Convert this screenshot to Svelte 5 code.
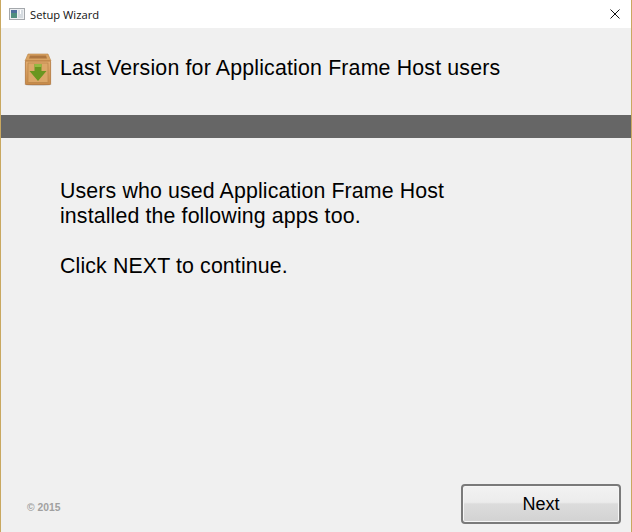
<script>
  const title = 'Setup Wizard'
</script>

<div class="window">
  <div class="titlebar">
    <svg class="app-icon" width="16" height="16" viewBox="0 0 16 16">
      <rect x="0.5" y="2.5" width="15" height="11" fill="#eef0f2" stroke="#a4a8ac"/>
      <rect x="2" y="4" width="6" height="8" fill="#4f8f7e"/>
      <rect x="2" y="4" width="6" height="3" fill="#4d6f9c"/>
      <rect x="9" y="4" width="5" height="8" fill="#d5dbe0"/>
      <rect x="11" y="4" width="1" height="4" fill="#fff"/>
    </svg>
    <span class="title">{title}</span>
    <svg class="close" width="10" height="10" viewBox="0 0 10 10">
      <path d="M0.5 0.5l9 9M9.5 0.5l-9 9" stroke="#111" stroke-width="1" fill="none"/>
    </svg>
  </div>

  <header class="head">
    <svg class="box" width="28" height="34" viewBox="0 0 28 34">
      <defs>
        <linearGradient id="wood" x1="0" y1="0" x2="0" y2="1">
          <stop offset="0" stop-color="#e3ae70"/>
          <stop offset="1" stop-color="#c88a48"/>
        </linearGradient>
      </defs>
      <ellipse cx="14" cy="32.500" rx="13.500" ry="1.300" fill="#c9c4be"/>
      <path d="M4 2h20l3 7H1z" fill="#d9a362" stroke="#b98448" stroke-width="0.600"/>
      <path d="M6 3.500h16l1 3H5z" fill="#ad7640"/>
      <rect x="1.400" y="9" width="25.200" height="23.500" rx="0.800" fill="url(#wood)" stroke="#b0743a" stroke-width="0.800"/>
      <rect x="4" y="11" width="20" height="19.500" fill="#dca768" stroke="#b98448" stroke-width="0.700"/>
      <path d="M10.500 12h7v7h5L14 29 5.500 19h5z" fill="#6b9620"/>
      <path d="M10.500 12h7v3h-7z" fill="#94ba42"/>
    </svg>
    <h1>Last Version for Application Frame Host users</h1>
  </header>

  <div class="band"></div>

  <main class="body">
    <p>Users who used Application Frame Host<br />installed the following apps too.</p>
    <p>Click NEXT to continue.</p>
  </main>

  <footer class="foot">
    <span class="copy">© 2015</span>
    <button class="next">Next</button>
  </footer>
</div>

<style>
  :global(body) {
    margin: 0;
    overflow: hidden;
  }

  .window {
    width: 632px;
    height: 532px;
    box-sizing: border-box;
    display: flex;
    flex-direction: column;
    background: #f0f0f0;
    border-left: 1px solid #c9a860;
    border-right: 1px solid #c9a860;
    font-family: "Liberation Sans", Arial, sans-serif;
    color: #000;
  }

  .titlebar {
    height: 28px;
    flex-shrink: 0;
    background: #fff;
    display: flex;
    align-items: center;
    padding: 0 11px 0 8px;
  }

  .app-icon {
    margin-right: 5px;
  }

  .title {
    font-family: "Open Sans", sans-serif;
    font-size: 11.200px;
    color: #111;
  }

  .close {
    margin-left: auto;
  }

  .head {
    height: 87px;
    flex-shrink: 0;
    box-sizing: border-box;
    display: flex;
    align-items: center;
    padding: 0 0 6px 23px;
    gap: 8px;
  }

  h1 {
    margin: 0;
    font-size: 21.330px;
    font-weight: 400;
    letter-spacing: 0.170px;
  }

  .band {
    height: 23px;
    flex-shrink: 0;
    background: #666;
  }

  .body {
    flex: 1;
    padding: 41px 0 0 59px;
    font-size: 21.330px;
    line-height: 25px;
    letter-spacing: 0.130px;
  }

  .body p {
    margin: 0 0 25px;
  }

  .foot {
    display: flex;
    align-items: flex-end;
    justify-content: space-between;
    padding: 0 10px 8px 26px;
  }

  .copy {
    font-size: 10.300px;
    font-weight: 700;
    color: #a0a0a0;
    margin-bottom: 11px;
  }

  .next {
    width: 160px;
    height: 40px;
    box-sizing: border-box;
    border: 2px solid #7a7a7a;
    border-radius: 4px;
    background: linear-gradient(#f2f2f2 0%, #ececec 45%, #dcdcdc 50%, #d2d2d2 100%);
    box-shadow: inset 0 0 0 1px #f6f6f6;
    font-family: "Liberation Sans", Arial, sans-serif;
    font-size: 18px;
    color: #000;
    padding: 0;
  }
</style>
